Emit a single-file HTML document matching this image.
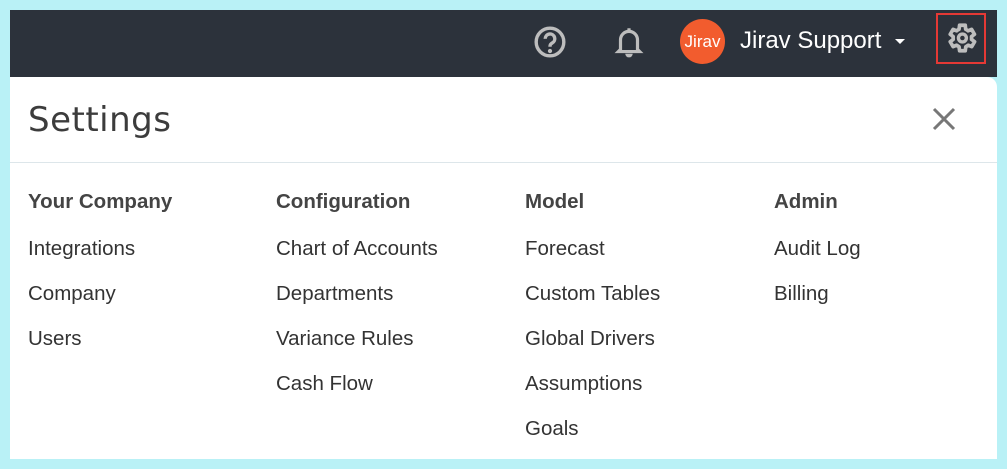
<!DOCTYPE html>
<html><head><style>
body{margin:0;width:1007px;height:469px;background:#b9f1f6;position:relative;overflow:hidden;font-family:"Liberation Sans",sans-serif}
.bar{position:absolute;left:10px;top:10px;width:987px;height:67px;background:#2c323b}
.panel{position:absolute;left:10px;top:77px;width:987px;height:382px;background:#fff;border-top-right-radius:10px}
.title{position:absolute;left:18px;top:23px;font-family:"DejaVu Sans",sans-serif;font-size:34px;color:#3c3c3c;letter-spacing:0.5px}
.div{position:absolute;left:0;top:85px;width:987px;height:1px;background:#dde6ea}
.col{position:absolute;top:113px;font-size:20.5px;color:#333}
.col b{display:block;color:#444;margin-bottom:25px;height:22px}
.col div{margin-bottom:23px;height:22px}
.close{position:absolute;left:920px;top:28px}
.name{position:absolute;left:740px;top:27px;color:#fff;font-size:24px}
</style></head><body>
<div class="bar"></div>
<svg style="position:absolute;left:533px;top:25px" width="34" height="34" viewBox="0 0 32 32"><circle cx="16" cy="16" r="13" fill="none" stroke="#bdbdbd" stroke-width="3.2"/><path d="M11.5 13a4.5 4.5 0 1 1 6.5 4c-1.5 1-2 1.5-2 3.5" fill="none" stroke="#bdbdbd" stroke-width="3.2"/><circle cx="16" cy="24.5" r="2" fill="#bdbdbd"/></svg>
<svg style="position:absolute;left:614px;top:25px" width="30" height="34" viewBox="0 0 28 32"><path d="M14 3v2M6 23V14a8 8 0 0 1 16 0v9l2 2H4z" fill="none" stroke="#bdbdbd" stroke-width="3"/><path d="M10.5 27a3.5 3.5 0 0 0 7 0" fill="#bdbdbd"/></svg>
<div style="position:absolute;left:680px;top:19px;width:45px;height:45px;border-radius:50%;background:#f25c2e;color:#fff;font-size:17px;line-height:45px;text-align:center">Jirav</div>
<div class="name">Jirav Support</div>
<div style="position:absolute;left:895px;top:39px;width:0;height:0;border-left:5px solid transparent;border-right:5px solid transparent;border-top:5px solid #fff"></div>
<div style="position:absolute;left:936px;top:13px;width:50px;height:51px;box-sizing:border-box;border:2px solid #e53935"></div>
<svg style="position:absolute;left:944px;top:21px" width="34" height="34" viewBox="0 0 24 24"><path d="M19.4 13a7.5 7.5 0 0 0 0-2l2.1-1.6-2-3.5-2.5 1a7 7 0 0 0-1.7-1L15 3h-4l-.4 2.9a7 7 0 0 0-1.7 1l-2.5-1-2 3.5L6.5 11a7.5 7.5 0 0 0 0 2l-2.1 1.6 2 3.5 2.5-1a7 7 0 0 0 1.7 1L11 21h4l.4-2.9a7 7 0 0 0 1.7-1l2.5 1 2-3.5z" fill="none" stroke="#bdbdbd" stroke-width="2.6" stroke-linejoin="round"/><circle cx="13" cy="12" r="2.8" fill="none" stroke="#bdbdbd" stroke-width="2.4"/></svg>
<div class="panel">
<div class="title">Settings</div>
<svg class="close" width="28" height="28" viewBox="0 0 28 28"><path d="M4 4L24 24M24 4L4 24" stroke="#777" stroke-width="3"/></svg>
<div class="div"></div>
<div class="col" style="left:18px"><b>Your Company</b><div>Integrations</div><div>Company</div><div>Users</div></div>
<div class="col" style="left:266px"><b>Configuration</b><div>Chart of Accounts</div><div>Departments</div><div>Variance Rules</div><div>Cash Flow</div></div>
<div class="col" style="left:515px"><b>Model</b><div>Forecast</div><div>Custom Tables</div><div>Global Drivers</div><div>Assumptions</div><div>Goals</div></div>
<div class="col" style="left:764px"><b>Admin</b><div>Audit Log</div><div>Billing</div></div>
</div>
</body></html>
